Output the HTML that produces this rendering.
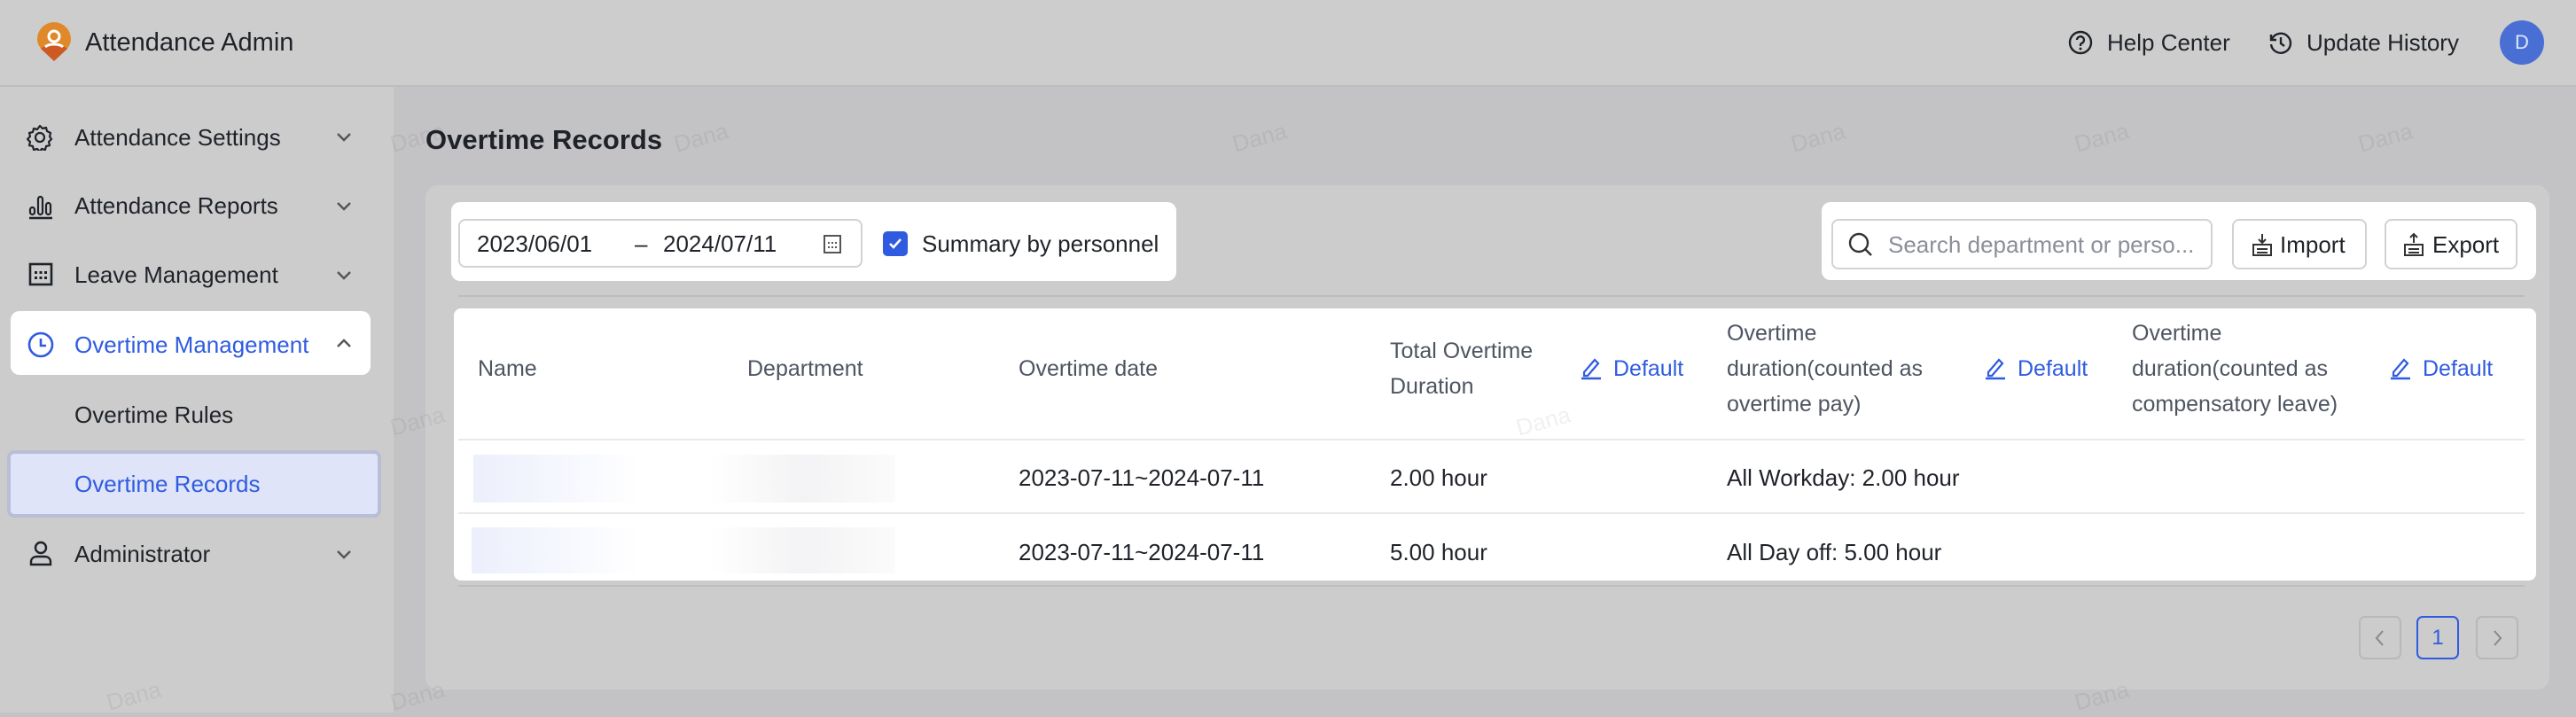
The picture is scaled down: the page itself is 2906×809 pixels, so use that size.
<!DOCTYPE html>
<html><head><meta charset="utf-8"><style>
*{box-sizing:border-box;margin:0;padding:0}
body{width:2906px;height:804px;overflow:hidden;background:#c3c3c5;font-family:"Liberation Sans",sans-serif;color:#1f2329;position:relative;font-size:26px}
.a{position:absolute}
.hdr{left:0;top:0;width:2906px;height:98px;background:#cdcdcd;border-bottom:2px solid #bdbdbd}
.side{left:0;top:98px;width:444px;height:706px;background:#cccccc}
.mi{position:absolute;left:84px;font-size:26px;white-space:nowrap;line-height:30px}
.chev{position:absolute;left:376px;width:24px;height:24px}
.card{left:480px;top:209px;width:2396px;height:569px;background:#cccccc;border-radius:14px}
.white{background:#fff;border-radius:10px}
.th{color:#4e5561;font-size:25px;line-height:40px}
.td{font-size:26px;line-height:30px}
.blue{color:#2f5be0}
.btn{background:#fff;border:2px solid #d0d3d6;border-radius:8px}
.wm{position:absolute;color:rgba(0,0,0,0.06);font-size:26px;transform:rotate(-15deg)}
</style></head><body>
<div class="a hdr"></div>
<svg class="a" style="left:40px;top:23px" width="42" height="48" viewBox="0 0 42 48"><path d="M21 2a19 19 0 0 1 19 19c0 8-6 13-10 16l-9 8-9-8C8 34 2 29 2 21A19 19 0 0 1 21 2z" fill="#e0892b"/><path d="M6 32c5-4 10-5 15-5s10 1 15 5l-15 14z" fill="#cc5a22"/><circle cx="21" cy="18" r="6" fill="none" stroke="#fff" stroke-width="3"/><path d="M11 30c4-4 16-4 20 0" stroke="#fff" stroke-width="3" fill="none"/></svg>
<div class="a" style="left:96px;top:31px;font-size:29px;line-height:34px">Attendance Admin</div>
<svg class="a" style="left:2333px;top:34px" width="28" height="28" viewBox="0 0 28 28"><circle cx="14" cy="14" r="12" fill="none" stroke="#1f2329" stroke-width="2.4"/><path d="M10 11a4 4 0 1 1 5 4c-1 .5-1 1-1 3" fill="none" stroke="#1f2329" stroke-width="2.4"/><circle cx="14" cy="21" r="1.5" fill="#1f2329"/></svg>
<div class="a" style="left:2377px;top:33px;font-size:26px;line-height:30px">Help Center</div>
<svg class="a" style="left:2559px;top:34px" width="28" height="28" viewBox="0 0 28 28"><path d="M4 10A11 11 0 1 1 3 16" fill="none" stroke="#1f2329" stroke-width="2.4"/><path d="M3 5v6h6" fill="none" stroke="#1f2329" stroke-width="2.4"/><path d="M14 8v7l4 3" fill="none" stroke="#1f2329" stroke-width="2.4"/></svg>
<div class="a" style="left:2602px;top:33px;font-size:26px;line-height:30px">Update History</div>
<div class="a" style="left:2820px;top:23px;width:50px;height:50px;border-radius:50%;background:#4a6fd4;color:#dfe6fb;font-size:22px;line-height:50px;text-align:center">D</div>

<div class="a side">
<svg class="a" style="left:30px;top:42px" width="30" height="30" viewBox="0 0 30 30"><path d="M15 2l3 3 4-1 1 4 4 2-1 4 2 3-3 3 1 4-4 1-1 4-4-1-2 3-3-3-4 1-1-4-4-1 1-4-3-3 3-3-1-4 4-1 1-4 4 1z" fill="none" stroke="#1f2329" stroke-width="2.2" stroke-linejoin="round"/><circle cx="15" cy="15" r="5" fill="none" stroke="#1f2329" stroke-width="2.2"/></svg>
<div class="mi" style="top:42px">Attendance Settings</div>
<svg class="chev" style="top:44px" viewBox="0 0 24 24"><path d="M5 9l7 7 7-7" fill="none" stroke="#555" stroke-width="2.4"/></svg>
<svg class="a" style="left:32px;top:120px" width="28" height="30" viewBox="0 0 28 30"><path d="M1 28h26" stroke="#1f2329" stroke-width="2.4"/><rect x="2" y="16" width="5" height="8" rx="2.5" fill="none" stroke="#1f2329" stroke-width="2.2"/><rect x="11" y="4" width="5" height="20" rx="2.5" fill="none" stroke="#1f2329" stroke-width="2.2"/><rect x="20" y="11" width="5" height="13" rx="2.5" fill="none" stroke="#1f2329" stroke-width="2.2"/></svg>
<div class="mi" style="top:119px">Attendance Reports</div>
<svg class="chev" style="top:122px" viewBox="0 0 24 24"><path d="M5 9l7 7 7-7" fill="none" stroke="#555" stroke-width="2.4"/></svg>
<svg class="a" style="left:32px;top:197px" width="28" height="28" viewBox="0 0 28 28"><rect x="2" y="3" width="24" height="23" fill="none" stroke="#1f2329" stroke-width="2.6"/><g fill="#1f2329"><rect x="7" y="11" width="3" height="3"/><rect x="12.5" y="11" width="3" height="3"/><rect x="18" y="11" width="3" height="3"/><rect x="7" y="17" width="3" height="3"/><rect x="12.5" y="17" width="3" height="3"/><rect x="18" y="17" width="3" height="3"/></g></svg>
<div class="mi" style="top:197px">Leave Management</div>
<svg class="chev" style="top:200px" viewBox="0 0 24 24"><path d="M5 9l7 7 7-7" fill="none" stroke="#555" stroke-width="2.4"/></svg>
<div class="a" style="left:12px;top:253px;width:406px;height:72px;background:#fff;border-radius:10px"></div>
<svg class="a" style="left:31px;top:276px" width="30" height="30" viewBox="0 0 30 30"><circle cx="15" cy="15" r="13" fill="none" stroke="#2f5be0" stroke-width="2.6"/><path d="M15 8v8h6" fill="none" stroke="#2f5be0" stroke-width="2.6"/></svg>
<div class="mi blue" style="top:276px">Overtime Management</div>
<svg class="chev" style="top:278px" viewBox="0 0 24 24"><path d="M5 15l7-7 7 7" fill="none" stroke="#555" stroke-width="2.4"/></svg>
<div class="mi" style="top:355px">Overtime Rules</div>
<div class="a" style="left:8px;top:410px;width:422px;height:76px;background:#dfe4f8;border:4px solid #b8bed6;border-radius:8px"></div>
<div class="mi blue" style="top:433px">Overtime Records</div>
<svg class="a" style="left:32px;top:512px" width="28" height="30" viewBox="0 0 28 30"><circle cx="14" cy="8" r="6" fill="none" stroke="#1f2329" stroke-width="2.4"/><path d="M3 27v-3c0-4 3-6 7-6h8c4 0 7 2 7 6v3z" fill="none" stroke="#1f2329" stroke-width="2.4"/></svg>
<div class="mi" style="top:512px">Administrator</div>
<svg class="chev" style="top:515px" viewBox="0 0 24 24"><path d="M5 9l7 7 7-7" fill="none" stroke="#555" stroke-width="2.4"/></svg>
</div>

<div class="a" style="left:480px;top:140px;font-size:31px;font-weight:600;line-height:36px">Overtime Records</div>
<div class="a card"></div>
<div class="a white" style="left:509px;top:228px;width:818px;height:89px"></div>
<div class="a" style="left:517px;top:247px;width:456px;height:55px;background:#fff;border:2px solid #d0d3d6;border-radius:8px"></div>
<div class="a td" style="left:538px;top:260px">2023/06/01</div>
<div class="a td" style="left:716px;top:260px">–</div>
<div class="a td" style="left:748px;top:260px">2024/07/11</div>
<svg class="a" style="left:928px;top:263px" width="22" height="24" viewBox="0 0 22 24"><rect x="2" y="3" width="18" height="19" fill="none" stroke="#555" stroke-width="2"/><g fill="#555"><rect x="6" y="10" width="2" height="2"/><rect x="10" y="10" width="2" height="2"/><rect x="14" y="10" width="2" height="2"/><rect x="6" y="15" width="2" height="2"/><rect x="10" y="15" width="2" height="2"/><rect x="14" y="15" width="2" height="2"/></g></svg>
<div class="a" style="left:996px;top:261px;width:28px;height:28px;background:#2f5be0;border-radius:5px"></div>
<svg class="a" style="left:996px;top:261px" width="28" height="28" viewBox="0 0 28 28"><path d="M8 14l4 4 8-9" fill="none" stroke="#fff" stroke-width="2.6"/></svg>
<div class="a td" style="left:1040px;top:260px">Summary by personnel</div>

<div class="a white" style="left:2055px;top:228px;width:806px;height:88px"></div>
<div class="a btn" style="left:2066px;top:247px;width:430px;height:57px"></div>
<svg class="a" style="left:2084px;top:261px" width="30" height="30" viewBox="0 0 30 30"><circle cx="13" cy="13" r="10" fill="none" stroke="#333" stroke-width="2.4"/><path d="M20 20l7 7" stroke="#333" stroke-width="2.4"/></svg>
<div class="a td" style="left:2130px;top:261px;color:#8a8f99">Search department or perso...</div>
<div class="a btn" style="left:2518px;top:247px;width:152px;height:57px"></div>
<svg class="a" style="left:2540px;top:262px" width="24" height="28" viewBox="0 0 24 28"><path d="M12 2v10M8 8l4 4 4-4" fill="none" stroke="#333" stroke-width="2"/><rect x="2" y="14" width="20" height="12" fill="none" stroke="#333" stroke-width="2"/><path d="M6 19h12M6 23h12" stroke="#333" stroke-width="2"/></svg>
<div class="a td" style="left:2572px;top:261px">Import</div>
<div class="a btn" style="left:2690px;top:247px;width:150px;height:57px"></div>
<svg class="a" style="left:2711px;top:262px" width="24" height="28" viewBox="0 0 24 28"><path d="M12 12V2M8 6l4-4 4 4" fill="none" stroke="#333" stroke-width="2"/><rect x="2" y="14" width="20" height="12" fill="none" stroke="#333" stroke-width="2"/><path d="M6 19h12M6 23h12" stroke="#333" stroke-width="2"/></svg>
<div class="a td" style="left:2744px;top:261px">Export</div>

<div class="a" style="left:517px;top:333px;width:2331px;height:2px;background:#bdbdbd"></div>
<div class="a white" style="left:512px;top:348px;width:2349px;height:307px;border-radius:8px"></div>
<div class="a" style="left:517px;top:495px;width:2331px;height:2px;background:#e8e9eb"></div>
<div class="a" style="left:517px;top:578px;width:2331px;height:2px;background:#e8e9eb"></div>
<div class="a" style="left:517px;top:660px;width:2331px;height:2px;background:#bdbdbd"></div>

<div class="a th" style="left:539px;top:396px">Name</div>
<div class="a th" style="left:843px;top:396px">Department</div>
<div class="a th" style="left:1149px;top:396px">Overtime date</div>
<div class="a th" style="left:1568px;top:376px">Total Overtime<br>Duration</div>
<div class="a th" style="left:1948px;top:356px">Overtime<br>duration(counted as<br>overtime pay)</div>
<div class="a th" style="left:2405px;top:356px">Overtime<br>duration(counted as<br>compensatory leave)</div>
<svg class="a" style="left:1782px;top:401px" width="26" height="28" viewBox="0 0 26 28"><path d="M5 19l12-14 4 4-12 14H5z" fill="none" stroke="#2f5be0" stroke-width="2.2"/><path d="M2 26h22" stroke="#2f5be0" stroke-width="2.4"/></svg>
<div class="a th blue" style="left:1820px;top:396px;color:#2f5be0">Default</div>
<svg class="a" style="left:2238px;top:401px" width="26" height="28" viewBox="0 0 26 28"><path d="M5 19l12-14 4 4-12 14H5z" fill="none" stroke="#2f5be0" stroke-width="2.2"/><path d="M2 26h22" stroke="#2f5be0" stroke-width="2.4"/></svg>
<div class="a th" style="left:2276px;top:396px;color:#2f5be0">Default</div>
<svg class="a" style="left:2695px;top:401px" width="26" height="28" viewBox="0 0 26 28"><path d="M5 19l12-14 4 4-12 14H5z" fill="none" stroke="#2f5be0" stroke-width="2.2"/><path d="M2 26h22" stroke="#2f5be0" stroke-width="2.4"/></svg>
<div class="a th" style="left:2733px;top:396px;color:#2f5be0">Default</div>

<div class="a" style="left:534px;top:513px;width:190px;height:54px;background:linear-gradient(90deg,#eceffc,#fff)"></div>
<div class="a" style="left:800px;top:513px;width:210px;height:54px;background:linear-gradient(90deg,#fff,#f3f3f5,#fbfbfb)"></div>
<div class="a" style="left:532px;top:595px;width:190px;height:52px;background:linear-gradient(90deg,#eceffc,#fff)"></div>
<div class="a" style="left:800px;top:595px;width:210px;height:52px;background:linear-gradient(90deg,#fff,#f3f3f5,#fbfbfb)"></div>
<div class="a td" style="left:1149px;top:524px">2023-07-11~2024-07-11</div>
<div class="a td" style="left:1568px;top:524px">2.00 hour</div>
<div class="a td" style="left:1948px;top:524px">All Workday: 2.00 hour</div>
<div class="a td" style="left:1149px;top:608px">2023-07-11~2024-07-11</div>
<div class="a td" style="left:1568px;top:608px">5.00 hour</div>
<div class="a td" style="left:1948px;top:608px">All Day off: 5.00 hour</div>

<div class="a" style="left:2661px;top:695px;width:48px;height:49px;border:2px solid #b6b8bc;border-radius:7px"></div>
<svg class="a" style="left:2675px;top:709px" width="20" height="22" viewBox="0 0 20 22"><path d="M13 3l-7 8 7 8" fill="none" stroke="#888" stroke-width="2"/></svg>
<div class="a" style="left:2726px;top:695px;width:48px;height:49px;border:2px solid #2f5be0;border-radius:7px;color:#2f5be0;text-align:center;line-height:45px;font-size:24px">1</div>
<div class="a" style="left:2793px;top:695px;width:48px;height:49px;border:2px solid #b6b8bc;border-radius:7px"></div>
<svg class="a" style="left:2807px;top:709px" width="20" height="22" viewBox="0 0 20 22"><path d="M7 3l7 8-7 8" fill="none" stroke="#888" stroke-width="2"/></svg>

<div class="wm" style="left:440px;top:140px">Dana</div>
<div class="wm" style="left:760px;top:140px">Dana</div>
<div class="wm" style="left:1390px;top:140px">Dana</div>
<div class="wm" style="left:2020px;top:140px">Dana</div>
<div class="wm" style="left:2340px;top:140px">Dana</div>
<div class="wm" style="left:2660px;top:140px">Dana</div>
<div class="wm" style="left:440px;top:460px">Dana</div>
<div class="wm" style="left:1710px;top:460px">Dana</div>
<div class="wm" style="left:120px;top:770px">Dana</div>
<div class="wm" style="left:440px;top:770px">Dana</div>
<div class="wm" style="left:2340px;top:770px">Dana</div>
</body></html>
